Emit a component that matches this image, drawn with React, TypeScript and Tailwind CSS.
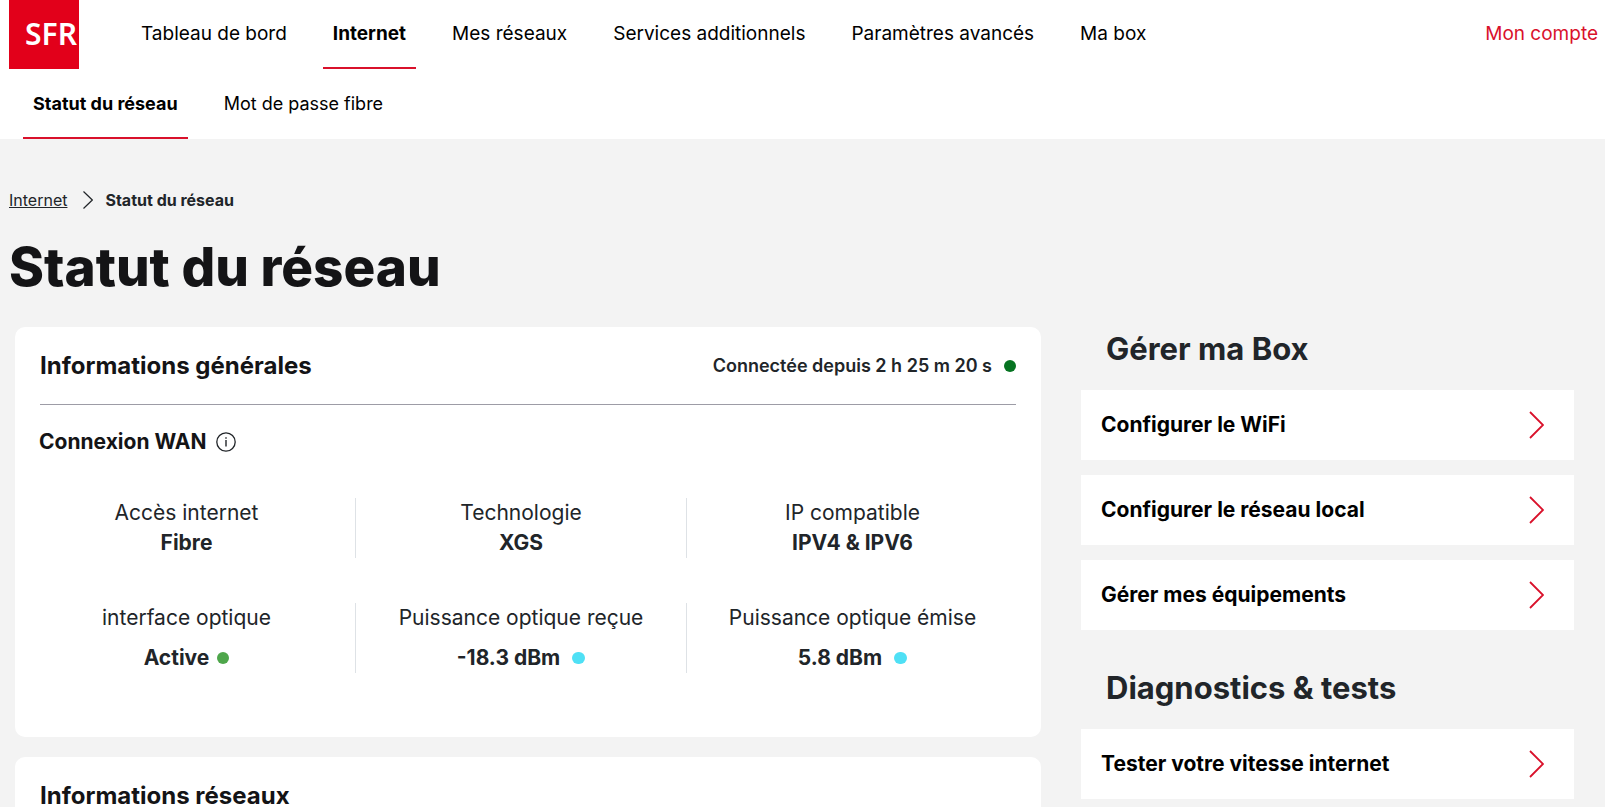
import React from 'react';

interface NavItem {
  label: string;
  active?: boolean;
}

interface Metric {
  label: string;
  value: string;
  dot?: string;
}

const MAIN_NAV: NavItem[] = [
  { label: 'Tableau de bord' },
  { label: 'Internet', active: true },
  { label: 'Mes réseaux' },
  { label: 'Services additionnels' },
  { label: 'Paramètres avancés' },
  { label: 'Ma box' },
];

const SUB_NAV: NavItem[] = [
  { label: 'Statut du réseau', active: true },
  { label: 'Mot de passe fibre' },
];

const WAN_METRICS: Metric[] = [
  { label: 'Accès internet', value: 'Fibre' },
  { label: 'Technologie', value: 'XGS' },
  { label: 'IP compatible', value: 'IPV4 & IPV6' },
];

const OPTICAL_METRICS: Metric[] = [
  { label: 'interface optique', value: 'Active', dot: 'ml-2 w-3 bg-[#4ea64b]' },
  { label: 'Puissance optique reçue', value: '-18.3 dBm', dot: 'ml-3 w-[13px] bg-[#4fe0f5]' },
  { label: 'Puissance optique émise', value: '5.8 dBm', dot: 'ml-3 w-[13px] bg-[#4fe0f5]' },
];

const BOX_LINKS = ['Configurer le WiFi', 'Configurer le réseau local', 'Gérer mes équipements'];
const TEST_LINKS = ['Tester votre vitesse internet'];

const NavLink: React.FC<{ item: NavItem }> = ({ item }) => (
  <a
    href="#"
    aria-current={item.active ? 'page' : undefined}
    className={
      item.active
        ? 'flex items-center h-full px-[10px] border-y-2 border-t-transparent border-b-[#d9112b] font-bold whitespace-nowrap'
        : 'flex items-center h-full px-[10px] whitespace-nowrap'
    }
  >
    {item.label}
  </a>
);

const InfoIcon: React.FC = () => (
  <svg width="20" height="20" viewBox="0 0 20 20" fill="none" stroke="#212529" aria-hidden="true">
    <circle cx="10" cy="10" r="9.2" strokeWidth="1.3" />
    <path d="M10 8v6.5" strokeWidth="1.4" />
    <path d="M10 5.2v1.5" strokeWidth="1.4" />
  </svg>
);

const MetricRow: React.FC<{ items: Metric[] }> = ({ items }) => (
  <dl className="grid grid-cols-[338fr_331fr_331fr] text-[21px] leading-[30px] text-center text-[#212529]">
    {items.map((item) => (
      <div key={item.label} className="border-r border-[#dee2e6] last:border-r-0">
        <dt>{item.label}</dt>
        <dd className={item.dot ? 'flex items-center justify-center h-10 pt-[10px] font-bold' : 'font-bold'}>
          {item.value}
          {item.dot && <span className={`inline-block h-3 rounded-full ${item.dot}`} />}
        </dd>
      </div>
    ))}
  </dl>
);

const SideSection: React.FC<{ title: string; links: string[] }> = ({ title, links }) => (
  <section>
    <h2 className="pl-[25px] pb-[20px] text-[31px] leading-[43px] font-bold text-[#212529]">{title}</h2>
    <ul className="flex flex-col gap-[15px]">
      {links.map((link) => (
        <li key={link}>
          <a href="#" className="flex items-center justify-between h-[70px] pl-5 pr-[30px] bg-white text-[21px] font-bold text-black">
            {link}
            <svg width="15" height="28" viewBox="0 0 15 28" fill="none" stroke="#d9112b" strokeWidth="1.8" aria-hidden="true">
              <path d="M1 1l13 13L1 27" />
            </svg>
          </a>
        </li>
      ))}
    </ul>
  </section>
);

const App: React.FC = () => (
  <div className="min-h-screen bg-[#f3f3f3] font-['Inter',sans-serif] text-black">
    <header className="bg-white">
      <div className="flex h-[69px] pl-[9px] pr-[7px] text-[19px]">
        <a href="#" aria-label="Accueil SFR" className="flex items-center justify-end w-[70px] pb-[2px] pr-[2px] bg-[#e2001a] font-['Noto_Sans',sans-serif] text-[30px] font-semibold text-white">
          SFR
        </a>
        <nav aria-label="Principale" className="flex flex-1 gap-[26px] pl-[52px]">
          {MAIN_NAV.map((item) => (
            <NavLink key={item.label} item={item} />
          ))}
        </nav>
        <a href="#" className="flex items-center text-[#d9112b] whitespace-nowrap">Mon compte</a>
      </div>
      <nav aria-label="Internet" className="flex h-[70px] gap-[26px] pl-[23px] text-lg">
        {SUB_NAV.map((item) => (
          <NavLink key={item.label} item={item} />
        ))}
      </nav>
    </header>

    <main>
      <nav aria-label="Fil d'Ariane" className="pt-[50px] pl-[9px] text-base leading-[22px] text-[#212529]">
        <ol className="flex items-center">
          <li><a href="#" className="underline">Internet</a></li>
          <li className="pl-4 pr-3" aria-hidden="true">
            <svg width="10" height="18" viewBox="0 0 10 18" fill="none" stroke="#212529" strokeWidth="1.2">
              <path d="M.5.5L9.3 9 .5 17.5" />
            </svg>
          </li>
          <li className="font-bold" aria-current="page">Statut du réseau</li>
        </ol>
      </nav>

      <h1 className="mt-[26px] mb-[30px] pl-[9px] text-[53px] leading-[60px] font-extrabold text-[#141416]">Statut du réseau</h1>

      <div className="grid grid-cols-[2fr_1fr]">
        <div className="flex flex-col gap-5 pl-[15px] pr-[29px]">
          <section className="pb-16 rounded-[10px] bg-white">
            <div className="flex items-center justify-between mx-[25px] h-[78px] border-b border-[#9d9ca6]">
              <h2 className="text-2xl font-bold text-[#141416]">Informations générales</h2>
              <p className="flex items-center gap-3 text-lg font-semibold text-[#212529]">
                Connectée depuis 2 h 25 m 20 s
                <span className="w-3 h-3 rounded-full bg-[#067321]" />
              </p>
            </div>
            <div className="flex items-center gap-[10px] mt-[22px] mb-[41px] pl-6">
              <h3 className="text-[21px] leading-[30px] font-bold text-[#141416]">Connexion WAN</h3>
              <button type="button" aria-label="Informations sur la connexion WAN"><InfoIcon /></button>
            </div>
            <div className="flex flex-col gap-[45px] pl-[3px] pr-[23px]">
              <MetricRow items={WAN_METRICS} />
              <MetricRow items={OPTICAL_METRICS} />
            </div>
          </section>

          <section className="rounded-[10px] bg-white">
            <div className="flex items-center mx-[25px] h-[78px]">
              <h2 className="text-2xl font-bold text-[#141416]">Informations réseaux</h2>
            </div>
          </section>
        </div>

        <aside className="flex flex-col gap-9 pl-[11px] pr-[31px]">
          <SideSection title="Gérer ma Box" links={BOX_LINKS} />
          <SideSection title="Diagnostics & tests" links={TEST_LINKS} />
        </aside>
      </div>
    </main>
  </div>
);

export default App;
